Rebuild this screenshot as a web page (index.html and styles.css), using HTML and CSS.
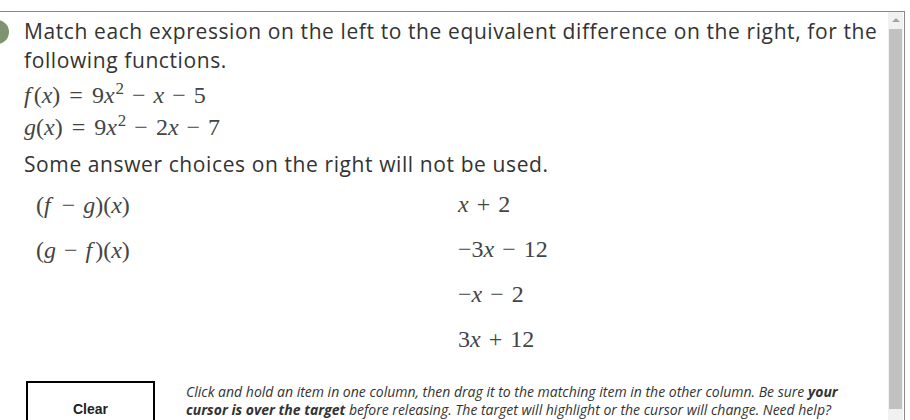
FILE: index.html
```html
<!DOCTYPE html>
<html lang="en">
<head>
    <meta charset="UTF-8">
    <title>Matching question</title>
    <link rel="stylesheet" href="styles.css">
</head>
<body>
    <div class="frame">
        <div class="question">
            <span class="marker"></span>
            <p class="prompt">Match each expression on the left to the equivalent difference on the right, for the following functions.</p>
            <p class="math-line first"><i class="fn">f</i>(<i>x</i>)<span class="rel">=</span>9<i>x</i><sup>2</sup><span class="op">−</span><i>x</i><span class="op">−</span>5</p>
            <p class="math-line"><i>g</i>(<i>x</i>)<span class="rel">=</span>9<i>x</i><sup>2</sup><span class="op">−</span>2<i>x</i><span class="op">−</span>7</p>
            <p class="prompt note">Some answer choices on the right will not be used.</p>

            <div class="match">
                <div class="col left-col">
                    <div class="item">(<i class="fn">f</i><span class="op">−</span><i>g</i>)(<i>x</i>)</div>
                    <div class="item">(<i>g</i><span class="op">−</span><i class="fn">f</i>)(<i>x</i>)</div>
                </div>
                <div class="col right-col">
                    <div class="item"><i>x</i><span class="op">+</span>2</div>
                    <div class="item">−3<i>x</i><span class="op">−</span>12</div>
                    <div class="item">−<i>x</i><span class="op">−</span>2</div>
                    <div class="item">3<i>x</i><span class="op">+</span>12</div>
                </div>
            </div>

            <div class="footer">
                <button class="clear-btn">Clear</button>
                <p class="help">Click and hold an item in one column, then drag it to the matching item in the other column. Be sure <b>your cursor is over the target</b> before releasing. The target will highlight or the cursor will change. Need help?</p>
            </div>
        </div>

        <!-- fake scrollbar -->
        <div class="scrollbar">
            <span class="arrow"></span>
            <span class="thumb"></span>
        </div>
    </div>
</body>
</html>
```

FILE: styles.css
```css
body {
    margin: 0;
    background: #fff;
    font-family: "Open Sans", Arial, sans-serif;
    color: #333;
    overflow: hidden;
}

.frame {
    margin-top: 11px;
    width: 904px;
    height: 420px;
    border-top: 1px solid #888;
    border-right: 1px solid #888;
    display: flex;
}

.question {
    flex: 1;
    position: relative;
    padding-left: 24px;
    padding-top: 5px;
}

.marker {
    position: absolute;
    left: -15px;
    top: 8px;
    width: 24px;
    height: 24px;
    border-radius: 50%;
    background: #7e9370;
}

.prompt {
    margin: 0;
    font-size: 21px;
    letter-spacing: 0.6px;
    line-height: 29px;
    padding-right: 4px;
}

.note {
    margin-top: 7px;
}

.math-line {
    margin: 0;
    font-family: "Liberation Serif", "Times New Roman", serif;
    font-size: 24px;
    line-height: 32px;
    color: #444;
}

.math-line.first {
    margin-top: 4px;
}

.math-line sup {
    font-size: 17px;
    line-height: 0;
    margin-left: 1px;
}

.fn {
    margin-right: 3px;
}

.rel {
    margin: 0 9px;
}

.op {
    margin: 0 8px;
}

.match {
    display: flex;
    margin-top: 10px;
}

.col {
    display: flex;
    flex-direction: column;
}

.left-col {
    width: 422px;
    padding-left: 12px;
    padding-top: 1px;
}

.item {
    font-family: "Liberation Serif", "Times New Roman", serif;
    font-size: 24px;
    line-height: 30px;
    height: 45px;
    color: #444;
}

.footer {
    display: flex;
    align-items: flex-start;
    margin-top: 12px;
    padding-left: 2px;
}

.clear-btn {
    width: 129px;
    height: 48px;
    border: 2px solid #000;
    background: #fff;
    font-family: "Liberation Sans", Arial, sans-serif;
    font-weight: bold;
    font-size: 14px;
    color: #222;
    padding-top: 8px;
    flex-shrink: 0;
}

.help {
    width: 690px;
    margin: 2px 0 0 31px;
    font-style: italic;
    font-size: 14px;
    line-height: 18px;
    color: #333;
}

.scrollbar {
    width: 15px;
    margin-right: 1px;
    background: #f1f1f1;
    display: flex;
    flex-direction: column;
    align-items: center;
}

.arrow {
    margin-top: 6px;
    width: 0;
    height: 0;
    border-left: 4px solid transparent;
    border-right: 4px solid transparent;
    border-bottom: 4px solid #a3a3a3;
}

.thumb {
    margin-top: 7px;
    width: 13px;
    height: 380px;
    background: #c1c1c1;
}
```
